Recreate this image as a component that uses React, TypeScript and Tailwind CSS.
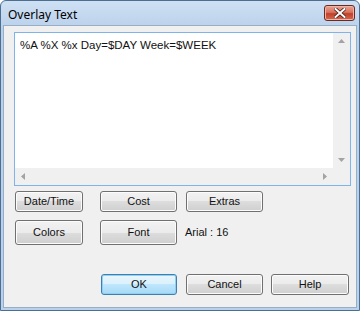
import React from 'react';

const FONT = { fontFamily: '"Liberation Sans", Arial, sans-serif' };

const Btn: React.FC<{ label: string; className?: string; primary?: boolean }> = ({ label, className = '', primary }) => (
  <div
    className={`flex items-center justify-center rounded-[3px] border text-[11px] text-[#111] ${
      primary
        ? 'border-[#3c7fb1] bg-[linear-gradient(#eaf6fd_0%,#d9f0fc_50%,#bee6fd_50%,#a7d9f5_100%)] shadow-[inset_0_0_0_1px_#8fd0f3]'
        : 'border-[#707070] bg-[linear-gradient(#f2f2f2_0%,#ebebeb_50%,#dddddd_50%,#cfcfcf_100%)] shadow-[inset_0_0_0_1px_#fcfcfc]'
    } ${className}`}
  >
    {label}
  </div>
);

const Arrow: React.FC<{ dir: 'up' | 'down' | 'left' | 'right' }> = ({ dir }) => {
  const pts = {
    up: '0,4 7,4 3.5,0',
    down: '0,0 7,0 3.5,4',
    left: '4,0 4,7 0,3.5',
    right: '0,0 0,7 4,3.5',
  }[dir];
  const w = dir === 'up' || dir === 'down' ? 7 : 4;
  const h = dir === 'up' || dir === 'down' ? 4 : 7;
  return (
    <svg width={w} height={h} viewBox={`0 0 ${w} ${h}`}>
      <polygon points={pts} fill="#a3a3a3" />
    </svg>
  );
};

export default function App() {
  return (
    <div style={FONT} className="w-[360px] h-[311px] overflow-hidden">
      <div className="flex flex-col w-[360px] h-[311px] rounded-t-[6px] border border-[#4d6e93] bg-[linear-gradient(#cfe0f3,#b8d0ea_30px,#b9d1ea)] px-[2px] pb-[2px]">
        {/* Title bar */}
        <div className="flex h-[24px] shrink-0 items-start justify-between">
          <span
            className="mt-[5px] ml-[5px] text-[12px] text-black"
            style={{ fontFamily: '"Noto Sans", "Open Sans", sans-serif' }}
          >
            Overlay Text
          </span>
          <div className="mt-[4px] mr-[2px] flex h-[16px] w-[31px] items-center justify-center rounded-[3px] border border-[#6a2a22] bg-[linear-gradient(#e8a493_0%,#d8735e_45%,#c2402a_55%,#d36a4f_100%)] shadow-[inset_0_0_0_1px_#efb4a5]">
            <svg width="12" height="10" viewBox="0 0 12 10">
              <path d="M1.5 1 L10.5 9 M10.5 1 L1.5 9" stroke="#4a1d16" strokeWidth="3.6" strokeLinecap="square" />
              <path d="M1.5 1 L10.5 9 M10.5 1 L1.5 9" stroke="#ffffff" strokeWidth="2" strokeLinecap="square" />
            </svg>
          </div>
        </div>

        {/* Client area */}
        <div className="flex flex-1 flex-col border border-[#98adc6] bg-[#f0f0f0] pl-[10px]">
          {/* Text box */}
          <div className="mt-[6px] flex h-[154px] w-[337px] flex-col border border-[#7eb4ea] bg-white">
            <div className="flex flex-1">
              <div className="flex-1 pl-[5px] pt-[4px] text-[11.5px] text-[#111]">%A %X %x Day=$DAY Week=$WEEK</div>
              <div className="flex w-[17px] flex-col items-center justify-between bg-[#f0f0f0] py-[6px]">
                <Arrow dir="up" />
                <Arrow dir="down" />
              </div>
            </div>
            <div className="flex h-[17px]">
              <div className="flex flex-1 items-center justify-between bg-[#f0f0f0] px-[6px]">
                <Arrow dir="left" />
                <Arrow dir="right" />
              </div>
              <div className="w-[17px] bg-[#f0f0f0]" />
            </div>
          </div>

          {/* Button row 1 */}
          <div className="mt-[5px] ml-[1px] flex h-[21px]">
            <Btn label="Date/Time" className="w-[68px]" />
            <Btn label="Cost" className="ml-[17px] w-[77px]" />
            <Btn label="Extras" className="ml-[9px] w-[77px]" />
          </div>

          {/* Button row 2 */}
          <div className="mt-[8px] ml-[1px] flex h-[25px] items-center">
            <Btn label="Colors" className="h-[25px] w-[68px]" />
            <Btn label="Font" className="ml-[17px] h-[25px] w-[77px]" />
            <span className="ml-[8px] text-[11px] text-[#111]">Arial : 16</span>
          </div>

          {/* Dialog buttons */}
          <div className="mt-[29px] ml-[87px] flex h-[21px]">
            <Btn label="OK" primary className="w-[76px]" />
            <Btn label="Cancel" className="ml-[9px] w-[77px]" />
            <Btn label="Help" className="ml-[8px] w-[78px]" />
          </div>
        </div>
      </div>
    </div>
  );
}
